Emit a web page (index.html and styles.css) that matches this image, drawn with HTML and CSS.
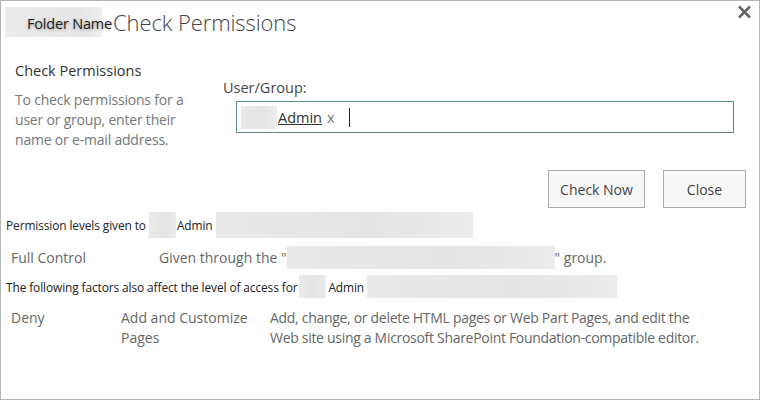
FILE: index.html
```html
<!DOCTYPE html>
<html>
<head>
<meta charset="utf-8">
<link rel="stylesheet" href="styles.css">
</head>
<body>
<div class="dialog">
  <header class="title-row">
    <span class="crumb"><span class="crumb-text">Folder Name</span></span>
    <h1 class="title">Check Permissions</h1>
    <span class="close-x" aria-label="Close">
      <svg width="15" height="14" viewBox="0 0 15 14"><path d="M2 1.5 L13 12.5 M13 1.5 L2 12.5" stroke="#666" stroke-width="2.6" fill="none"/></svg>
    </span>
  </header>

  <section class="form">
    <div class="intro">
      <h2 class="intro-head">Check Permissions</h2>
      <p class="intro-text">To check permissions for a user or group, enter their name or e-mail address.</p>
    </div>
    <div class="field">
      <label class="field-label">User/Group:</label>
      <div class="picker">
        <span class="blur chip-blur"></span><span class="chip-name">Admin</span><span class="chip-x">x</span><span class="caret"></span>
      </div>
    </div>
  </section>

  <div class="actions">
    <button class="btn btn-check">Check Now</button>
    <button class="btn btn-close">Close</button>
  </div>

  <div class="results">
    <div class="row row-head row1">
      <span>Permission levels given to</span><span class="blur b-small"></span><span>Admin</span><span class="blur b-long1"></span>
    </div>
    <div class="row row-perm">
      <span class="col1">Full Control</span><span class="given">Given through the "</span><span class="blur b-group"></span><span>" group.</span>
    </div>
    <div class="row row-head row3">
      <span>The following factors also affect the level of access for</span><span class="blur b-small2"></span><span>Admin</span><span class="blur b-long2"></span>
    </div>
    <div class="row-deny">
      <span class="col1">Deny</span>
      <span class="col2">Add and Customize Pages</span>
      <span class="col3">Add, change, or delete HTML pages or Web Part Pages, and edit the Web site using a Microsoft SharePoint Foundation-compatible editor.</span>
    </div>
  </div>
</div>
</body>
</html>
```

FILE: styles.css
```css
* { box-sizing: border-box; }
html, body { margin: 0; padding: 0; background: #fff; }
body { font-family: "Open Sans", "Noto Sans", sans-serif; color: #444; }

.dialog {
  width: 760px;
  height: 400px;
  border: 1px solid #b4b4b4;
  position: relative;
  overflow: hidden;
}

.title-row {
  display: flex;
  align-items: center;
  height: 30px;
  margin-top: 6px;
  padding-left: 4px;
}
.crumb {
  display: inline-flex;
  align-items: center;
  flex: none;
  width: 97px;
  height: 30px;
  padding-left: 22px;
  background: linear-gradient(90deg, #ececec, #e6e6e6 80%, #eeeeee);
  white-space: nowrap;
}
.crumb-text {
  font-size: 14.5px;
  color: #1e1e1e;
  letter-spacing: -0.2px;
  text-shadow: 0 1px 3px rgba(0,0,0,0.35);
  margin-top: 2px;
}
.title {
  margin: 0 0 0 11px;
  font-size: 22px;
  font-weight: 300;
  color: #444;
  letter-spacing: -0.1px;
}
.close-x {
  margin-left: auto;
  margin-right: 7px;
  align-self: flex-start;
  margin-top: -2px;
  display: flex;
}

.form {
  display: flex;
  margin-top: 23px;
}
.intro {
  width: 222px;
  flex: none;
  padding-left: 14px;
}
.intro-head {
  margin: 0;
  font-size: 14.5px;
  font-weight: 400;
  color: #333;
  line-height: 22px;
}
.intro-text {
  margin: 8px 0 0;
  max-width: 176px;
  font-size: 14px;
  line-height: 20px;
  color: #777;
  letter-spacing: -0.2px;
}
.field {
  padding-top: 18px;
}
.field-label {
  display: block;
  font-size: 14.5px;
  line-height: 20px;
  color: #444;
}
.picker {
  margin: 3px 0 0 13px;
  width: 498px;
  height: 32px;
  border: 1px solid #5d8c8c;
  display: flex;
  align-items: center;
  padding-left: 4px;
  font-size: 14.5px;
}
.blur {
  display: inline-block;
  background: linear-gradient(90deg, #e9e9e9, #e4e4e4 60%, #ececec);
}
.chip-blur { width: 36px; height: 23px; }
.chip-name { color: #333; text-decoration: underline; margin-left: 1px; }
.chip-x { color: #777; margin-left: 5px; }
.caret { width: 1px; height: 19px; background: #222; margin-left: 14px; }

.actions {
  display: flex;
  justify-content: flex-end;
  gap: 18px;
  padding-right: 13px;
  margin-top: 20px;
}
.btn {
  height: 38px;
  background: #f7f7f7;
  border: 1px solid #ababab;
  font-family: inherit;
  font-size: 14px;
  color: #444;
  padding: 0;
}
.btn-check { width: 97px; }
.btn-close { width: 83px; }

.results { margin-top: 4px; }
.row {
  display: flex;
  align-items: center;
  white-space: nowrap;
}
.row-head {
  font-size: 11.9px;
  color: #222;
  padding-left: 5px;
  letter-spacing: -0.1px;
}
.row1 { height: 26px; }
.row1 .b-small { width: 27px; height: 26px; margin: 0 1px 0 3px; }
.row1 .b-long1 { width: 257px; height: 26px; margin-left: 4px; }
.row-perm {
  margin-top: 8px;
  height: 23px;
  font-size: 14px;
  color: #666;
  padding-left: 10px;
}
.row-perm .col1 { width: 148px; }
.b-group { width: 268px; height: 23px; }
.row3 { margin-top: 6px; height: 23px; }
.row3 .b-small2 { width: 27px; height: 23px; margin: 0 2px 0 2px; }
.row3 .b-long2 { width: 250px; height: 23px; margin-left: 3px; }

.row-deny {
  display: flex;
  margin-top: 10px;
  padding-left: 10px;
  font-size: 14px;
  line-height: 20px;
  color: #666;
}
.row-deny .col1 { width: 110px; flex: none; }
.row-deny .col2 { width: 149px; flex: none; }
.row-deny .col3 { width: 445px; letter-spacing: -0.3px; }
```
